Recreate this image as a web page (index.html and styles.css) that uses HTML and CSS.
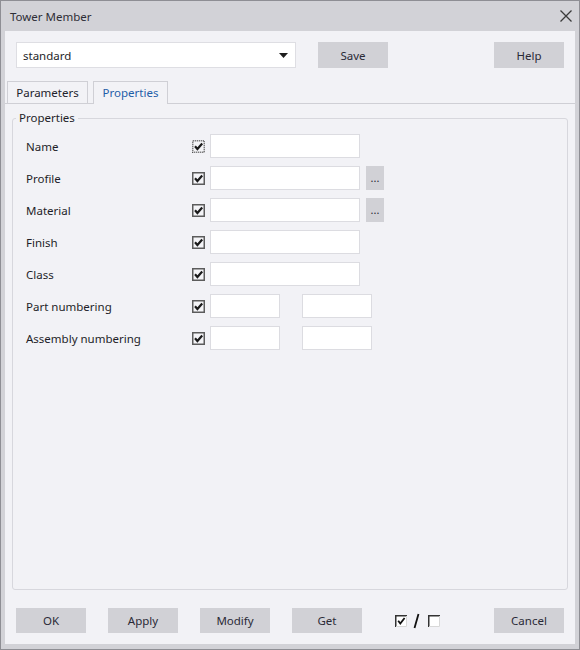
FILE: index.html
```html
<!DOCTYPE html>
<html>
<head>
<meta charset="utf-8">
<link rel="stylesheet" href="styles.css">
</head>
<body>
<div class="window">
  <div class="titlebar">
    <span class="title">Tower Member</span>
    <svg class="close" width="12" height="12" viewBox="0 0 12 12"><path d="M0.5 0.5 L11.5 11.5 M11.5 0.5 L0.5 11.5" stroke="#3a3a3a" stroke-width="1.3" fill="none"/></svg>
  </div>
  <div class="client">
    <div class="toprow">
      <div class="combo">
        <span>standard</span>
        <svg class="arrow" width="9" height="5" viewBox="0 0 9 5"><path d="M0 0 H9 L4.5 5 Z" fill="#1e1e1e"/></svg>
      </div>
      <button class="btn save">Save</button>
      <div class="spacer"></div>
      <button class="btn">Help</button>
    </div>
    <div class="tabs">
      <div class="tab tab-params">Parameters</div>
      <div class="tab tab-props active">Properties</div>
    </div>
    <div class="panel">
      <fieldset class="group">
        <legend>Properties</legend>
        <div class="rows">
          <div class="row">
            <span class="label">Name</span>
            <svg class="chk" width="13" height="13" viewBox="0 0 13 13"><rect x="0.75" y="0.75" width="11.5" height="11.5" fill="#f4f4f7" stroke="#555" stroke-width="1.5" stroke-dasharray="1 1"/><path d="M3 6.3 L5.4 9 L10.2 3.6" fill="none" stroke="#1a1a1a" stroke-width="2.2"/></svg>
            <span class="field wide"></span>
          </div>
          <div class="row">
            <span class="label">Profile</span>
            <svg class="chk" width="13" height="13" viewBox="0 0 13 13"><rect x="0.75" y="0.75" width="11.5" height="11.5" fill="#f4f4f7" stroke="#5c5c5c" stroke-width="1.5"/><path d="M3 6.3 L5.4 9 L10.2 3.6" fill="none" stroke="#1a1a1a" stroke-width="2.2"/></svg>
            <span class="field wide"></span>
            <button class="dots">...</button>
          </div>
          <div class="row">
            <span class="label">Material</span>
            <svg class="chk" width="13" height="13" viewBox="0 0 13 13"><rect x="0.75" y="0.75" width="11.5" height="11.5" fill="#f4f4f7" stroke="#5c5c5c" stroke-width="1.5"/><path d="M3 6.3 L5.4 9 L10.2 3.6" fill="none" stroke="#1a1a1a" stroke-width="2.2"/></svg>
            <span class="field wide"></span>
            <button class="dots">...</button>
          </div>
          <div class="row">
            <span class="label">Finish</span>
            <svg class="chk" width="13" height="13" viewBox="0 0 13 13"><rect x="0.75" y="0.75" width="11.5" height="11.5" fill="#f4f4f7" stroke="#5c5c5c" stroke-width="1.5"/><path d="M3 6.3 L5.4 9 L10.2 3.6" fill="none" stroke="#1a1a1a" stroke-width="2.2"/></svg>
            <span class="field wide"></span>
          </div>
          <div class="row">
            <span class="label">Class</span>
            <svg class="chk" width="13" height="13" viewBox="0 0 13 13"><rect x="0.75" y="0.75" width="11.5" height="11.5" fill="#f4f4f7" stroke="#5c5c5c" stroke-width="1.5"/><path d="M3 6.3 L5.4 9 L10.2 3.6" fill="none" stroke="#1a1a1a" stroke-width="2.2"/></svg>
            <span class="field wide"></span>
          </div>
          <div class="row">
            <span class="label">Part numbering</span>
            <svg class="chk" width="13" height="13" viewBox="0 0 13 13"><rect x="0.75" y="0.75" width="11.5" height="11.5" fill="#f4f4f7" stroke="#5c5c5c" stroke-width="1.5"/><path d="M3 6.3 L5.4 9 L10.2 3.6" fill="none" stroke="#1a1a1a" stroke-width="2.2"/></svg>
            <span class="field short"></span>
            <span class="field short second"></span>
          </div>
          <div class="row">
            <span class="label">Assembly numbering</span>
            <svg class="chk" width="13" height="13" viewBox="0 0 13 13"><rect x="0.75" y="0.75" width="11.5" height="11.5" fill="#f4f4f7" stroke="#5c5c5c" stroke-width="1.5"/><path d="M3 6.3 L5.4 9 L10.2 3.6" fill="none" stroke="#1a1a1a" stroke-width="2.2"/></svg>
            <span class="field short"></span>
            <span class="field short second"></span>
          </div>
        </div>
      </fieldset>
    </div>
    <div class="bottomrow">
      <button class="btn">OK</button>
      <button class="btn">Apply</button>
      <button class="btn">Modify</button>
      <button class="btn">Get</button>
      <svg class="toggle" width="46" height="16" viewBox="0 0 46 16">
        <rect x="0" y="2" width="12" height="12" fill="#ffffff"/>
        <path d="M0.75 14 V2.75 H12" fill="none" stroke="#333" stroke-width="1.5"/>
        <path d="M1 13.5 H11.5 V3" fill="none" stroke="#d8d8d8" stroke-width="1"/>
        <path d="M3.2 7.8 L5.3 10.5 L9.6 5" fill="none" stroke="#111" stroke-width="1.8"/>
        <path d="M23.5 1 L19.5 15" fill="none" stroke="#111" stroke-width="1.8"/>
        <rect x="33" y="2" width="12" height="12" fill="#ffffff"/>
        <path d="M33.75 14 V2.75 H45" fill="none" stroke="#333" stroke-width="1.5"/>
        <path d="M34 13.5 H44.5 V3" fill="none" stroke="#d8d8d8" stroke-width="1"/>
      </svg>
      <div class="spacer"></div>
      <button class="btn">Cancel</button>
    </div>
  </div>
</div>
</body>
</html>
```

FILE: styles.css
```css
html, body {
  margin: 0;
  padding: 0;
}
body {
  font-family: "Noto Sans", "Open Sans", sans-serif;
  font-size: 11.5px;
  color: #1e1e28;
}
.window {
  width: 580px;
  height: 650px;
  box-sizing: border-box;
  border: 1px solid #8e8e94;
  background: #d2d2d7;
  padding: 0 4px 5px 4px;
  display: flex;
  flex-direction: column;
}
.titlebar {
  height: 30px;
  flex: none;
  display: flex;
  align-items: center;
  padding-left: 5px;
  padding-right: 3px;
}
.title {
  flex: 1;
  color: #2e2e36;
  font-size: 11.5px;
}
.close {
  display: block;
}
.client {
  flex: 1;
  background: #f2f2f6;
  display: flex;
  flex-direction: column;
  min-height: 0;
}
.toprow {
  display: flex;
  align-items: stretch;
  margin: 11px 11px 0 11px;
  height: 26px;
}
.combo {
  width: 280px;
  box-sizing: border-box;
  background: #ffffff;
  border: 1px solid #dedee3;
  display: flex;
  align-items: center;
  padding: 0 7px 0 6px;
}
.combo span {
  flex: 1;
}
.arrow {
  display: block;
}
.btn {
  width: 70px;
  height: 25px;
  border: none;
  background: #d1d1d6;
  font-family: inherit;
  font-size: 11.5px;
  color: #2a2a36;
  padding: 0;
  margin: 0;
}
.toprow .btn {
  height: 26px;
}
.save {
  margin-left: 22px;
}
.spacer {
  flex: 1;
}
.tabs {
  display: flex;
  margin-top: 13px;
  padding-left: 2px;
  height: 22px;
  border-bottom: 1px solid #cfcfd5;
  gap: 5px;
}
.tab {
  box-sizing: border-box;
  height: 22px;
  border: 1px solid #cfcfd5;
  border-bottom: none;
  display: flex;
  align-items: center;
  justify-content: center;
  color: #22222c;
}
.tab-params {
  width: 81px;
}
.tab-props {
  width: 75px;
}
.tab.active {
  color: #1f5ea8;
  height: 23px;
  background: #f2f2f6;
  padding-bottom: 1px;
}
.panel {
  flex: 1;
  display: flex;
  flex-direction: column;
  padding: 6px 7px 0 7px;
  min-height: 0;
}
.group {
  flex: 1;
  margin: 0;
  padding: 0;
  min-width: 0;
  border: 1px solid #d7d7dd;
  border-radius: 3px;
}
.group legend {
  margin-left: 3px;
  padding: 0 3px;
  line-height: 16px;
  color: #1e1e28;
}
.rows {
  display: flex;
  flex-direction: column;
  gap: 8px;
  padding: 8px 0 0 13px;
}
.row {
  display: flex;
  align-items: center;
  height: 24px;
}
.label {
  width: 166px;
  flex: none;
}
.chk {
  display: block;
  flex: none;
  margin-right: 5px;
}
.field {
  display: block;
  box-sizing: border-box;
  height: 24px;
  background: #ffffff;
  border: 1px solid #dcdce1;
}
.wide {
  width: 150px;
}
.short {
  width: 70px;
}
.second {
  margin-left: 22px;
}
.dots {
  width: 18px;
  height: 24px;
  margin-left: 6px;
  border: none;
  padding: 0;
  background: #d1d1d6;
  font-family: inherit;
  font-size: 11px;
  line-height: 24px;
  color: #2a2a36;
}
.bottomrow {
  display: flex;
  align-items: center;
  margin: 18px 11px 11px 11px;
  height: 25px;
  gap: 22px;
}
.toggle {
  display: block;
  margin-left: 11px;
  margin-top: 1px;
}
```
